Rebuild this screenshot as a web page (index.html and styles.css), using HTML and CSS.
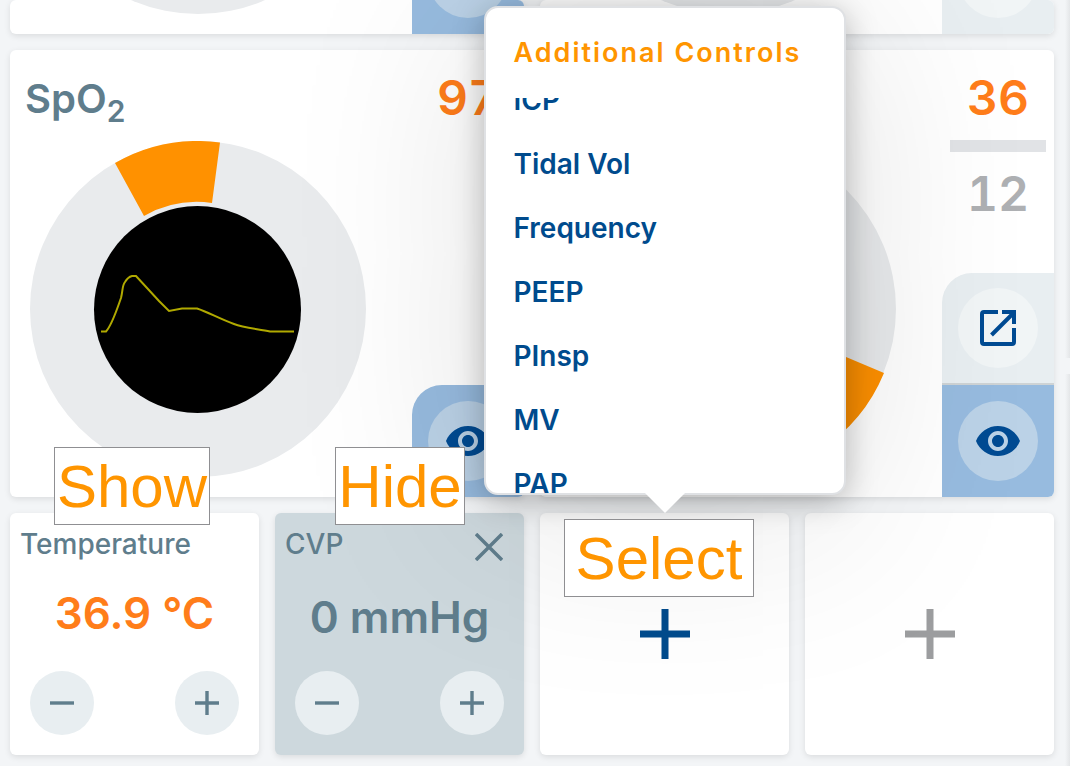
FILE: index.html
```html
<!DOCTYPE html>
<html lang="en">
<head>
	<meta charset="utf-8">
	<meta name="viewport" content="width=device-width, initial-scale=1.0">
	<title>Patient Monitor</title>
	<link rel="stylesheet" href="styles.css">
</head>
<body>
	<svg class="defs" aria-hidden="true">
		<symbol id="eye" viewBox="0 0 24 24">
			<path d="M12 4.5C7 4.5 2.73 7.61 1 12c1.73 4.39 6 7.5 11 7.5s9.27-3.11 11-7.5c-1.73-4.39-6-7.5-11-7.5zM12 17c-2.76 0-5-2.24-5-5s2.24-5 5-5 5 2.24 5 5-2.24 5-5 5zm0-8c-1.66 0-3 1.34-3 3s1.34 3 3 3 3-1.34 3-3-1.34-3-3-3z"/>
		</symbol>
		<symbol id="minus" viewBox="0 0 24 24">
			<path d="M0 10.3h24v3.4H0z"/>
		</symbol>
		<symbol id="plus" viewBox="0 0 24 24">
			<path d="M0 10.3h10.3V0h3.4v10.3H24v3.4H13.7V24h-3.4V13.7H0z"/>
		</symbol>
		<symbol id="plus-big" viewBox="0 0 50 50">
			<path d="M0 21.5h21.5V0h7v21.5H50v7H28.500V50h-7V28.500H0z"/>
		</symbol>
	</svg>

	<div class="screen">
		<main>
			<!-- bottom edge of the cards above -->
			<section class="card wide">
				<div class="gauge-area">
					<svg class="gauge" viewBox="0 0 336 336"><circle cx="168" cy="168" r="168" fill="#e9ebed"/></svg>
				</div>
				<div class="side">
					<div class="actions">
						<button class="action active" aria-label="Toggle visibility"><span class="round"></span></button>
					</div>
				</div>
			</section>
			<section class="card wide">
				<div class="gauge-area">
					<svg class="gauge" viewBox="0 0 336 336"><circle cx="168" cy="168" r="168" fill="#e9ebed"/></svg>
				</div>
				<div class="side">
					<div class="actions">
						<button class="action" aria-label="Toggle visibility"><span class="round"></span></button>
					</div>
				</div>
			</section>

			<section class="card wide">
				<div class="gauge-area">
					<h2 class="name">SpO<sub>2</sub></h2>
					<svg class="gauge" viewBox="0 0 336 336">
						<circle cx="168" cy="168" r="168" fill="#e9ebed"/>
						<path d="M85 22A168 168 0 0 1 190 1.500L182 62A107 107 0 0 0 114 75z" fill="#ff9100"/>
						<circle cx="167.500" cy="168.500" r="103.500" fill="#000"/>
						<path d="M71 190.500h5C82 184 87 168 91 157C93 149 92 145 95 141Q98 136 102 135h4L129 160L139 170L152 167.500H167C178 171 188 177 204 183C214 187 229 188 240 190.500H264" fill="none" stroke="#b0a900" stroke-width="2"/>
					</svg>
				</div>
				<div class="side">
					<div class="reading">97</div>
					<div class="actions">
						<button class="action active" aria-label="Toggle SpO2"><span class="round"><svg class="icon"><use href="#eye"/></svg></span></button>
					</div>
				</div>
			</section>

			<section class="card wide">
				<div class="gauge-area">
					<svg class="gauge" viewBox="0 0 336 336">
						<circle cx="168" cy="168" r="168" fill="#e9ebed"/>
						<path d="M324 232A168 168 0 0 1 260 309L226 258A107 107 0 0 0 267 208z" fill="#ff9100"/>
						<circle cx="167.500" cy="168.500" r="103.500" fill="#000"/>
					</svg>
				</div>
				<div class="side">
					<div class="reading">36</div>
					<div class="divider"></div>
					<div class="reading second">12</div>
					<div class="actions">
						<button class="action ruled" aria-label="Open in window">
							<span class="round">
								<svg class="icon open" viewBox="0 0 36 36">
									<path d="M18 2H4Q2 2 2 4V32Q2 34 4 34H32Q34 34 34 32V18M22 2H34V14M11.500 25L34 2.500" fill="none" stroke="#004b93" stroke-width="4"/>
								</svg>
							</span>
						</button>
						<button class="action active" aria-label="Toggle visibility"><span class="round"><svg class="icon"><use href="#eye"/></svg></span></button>
					</div>
				</div>
			</section>

			<section class="card small">
				<span class="label show">Show</span>
				<h3>Temperature</h3>
				<div class="value">36.9 °C</div>
				<div class="steps">
					<button aria-label="Decrease temperature"><svg><use href="#minus"/></svg></button>
					<button aria-label="Increase temperature"><svg><use href="#plus"/></svg></button>
				</div>
			</section>

			<section class="card small off">
				<span class="label hide">Hide</span>
				<div class="head">
					<h3>CVP</h3>
					<button class="close" aria-label="Hide CVP">
						<svg viewBox="0 0 28 28"><path d="M1 1L27 27M27 1L1 27" fill="none" stroke="#5f7d8c" stroke-width="3.500"/></svg>
					</button>
				</div>
				<div class="value">0 mmHg</div>
				<div class="steps">
					<button aria-label="Decrease CVP"><svg><use href="#minus"/></svg></button>
					<button aria-label="Increase CVP"><svg><use href="#plus"/></svg></button>
				</div>
			</section>

			<section class="card small">
				<button class="add" aria-label="Add control"><svg><use href="#plus-big"/></svg></button>
				<span class="label select">Select</span>
				<div class="popover">
					<h4>Additional Controls</h4>
					<ul>
						<li><button>ICP</button></li>
						<li><button>Tidal Vol</button></li>
						<li><button>Frequency</button></li>
						<li><button>PEEP</button></li>
						<li><button>PInsp</button></li>
						<li><button>MV</button></li>
						<li><button>PAP</button></li>
					</ul>
				</div>
			</section>

			<section class="card small">
				<button class="add muted" aria-label="Add control"><svg><use href="#plus-big"/></svg></button>
			</section>
		</main>
		<!-- shadow of the neighbouring column -->
		<div class="edge">
			<div class="upper"></div>
			<div class="lower"></div>
		</div>
	</div>
</body>
</html>
```
FILE: styles.css
```css
* {
	padding: 0;
	margin: 0;
	box-sizing: border-box;
}
body {
	font-family: Inter, "Liberation Sans", sans-serif;
	background: #f3f5f7;
	overflow: hidden;
}
button {
	border: none;
	background: transparent;
	font: inherit;
	cursor: pointer;
}
svg {
	display: block;
}
.defs {
	position: absolute;
	width: 0;
	height: 0;
}
.screen {
	display: flex;
	min-height: 100vh;
}
main {
	flex: 1;
	display: grid;
	grid-template-columns: repeat(4, 1fr);
	grid-template-rows: 34px auto auto;
	gap: 16px;
	padding: 0 11px 11px 10px;
}
.card {
	position: relative;
	min-width: 0;
	background: white;
	border-radius: 6px;
	box-shadow: 0 2px 6px rgba(0, 0, 0, 0.1);
}

/* gauge cards */
.wide {
	grid-column: span 2;
	display: flex;
	justify-content: space-between;
	align-items: flex-end;
	overflow: hidden;
}
.gauge-area {
	padding: 0 0 20px 20px;
}
.gauge {
	width: 336px;
	height: 336px;
}
.name {
	height: 91px;
	margin-left: -5px;
	padding-top: 25px;
	font-size: 40px;
	line-height: 48px;
	font-weight: 600;
	color: #5f7d8c;
}
.name sub {
	font-size: 30px;
	line-height: 30px;
}
.side {
	align-self: stretch;
	width: 112px;
	display: flex;
	flex-direction: column;
	justify-content: flex-end;
	align-items: center;
}
.reading {
	padding-top: 19px;
	height: 90px;
	font-size: 48px;
	line-height: 58px;
	font-weight: 600;
	font-variant-numeric: tabular-nums;
	color: #ff7d1a;
}
.reading.second {
	padding-top: 13px;
	color: #aeb0b3;
}
.divider {
	width: 96px;
	height: 12px;
	background: #e1e3e6;
}
.actions {
	flex: none;
	width: 112px;
	border-top-left-radius: 30px;
	overflow: hidden;
}
.reading ~ .actions {
	margin-top: auto;
}
.action {
	display: flex;
	justify-content: center;
	align-items: center;
	width: 100%;
	height: 112px;
	background: #e8eef1;
}
.action.ruled {
	border-bottom: 2px solid #ced3d5;
}
.action.active {
	background: #97bbdf;
}
.round {
	display: flex;
	justify-content: center;
	align-items: center;
	width: 80px;
	height: 80px;
	border-radius: 50%;
	background: #f1f5f6;
}
.active .round {
	background: #bbd2e7;
}
.icon {
	width: 48px;
	height: 48px;
	fill: #004b93;
}
.icon.open {
	width: 36px;
	height: 36px;
}

/* small cards */
.small {
	height: 242px;
	display: flex;
	flex-direction: column;
}
.small h3 {
	padding: 14px 10px 0;
	font-size: 28px;
	line-height: 34px;
	font-weight: 500;
	color: #5f7d8c;
}
.value {
	padding-top: 25px;
	text-align: center;
	font-size: 44px;
	line-height: 54px;
	font-weight: 600;
	color: #ff7d1a;
}
.steps {
	display: flex;
	justify-content: space-between;
	margin-top: auto;
	padding: 20px;
}
.steps button {
	display: flex;
	justify-content: center;
	align-items: center;
	width: 64px;
	height: 64px;
	border-radius: 50%;
	background: #e8eef1;
}
.steps svg {
	width: 24px;
	height: 24px;
	fill: #5f7d8c;
}
.off {
	background: #cdd8dd;
}
.off .value {
	padding-top: 29px;
	color: #5f7d8c;
}
.head {
	display: flex;
	justify-content: space-between;
}
.close {
	padding: 20px 21px 0 0;
	height: 48px;
}
.close svg {
	width: 28px;
	height: 28px;
}
.add {
	flex: 1;
	display: flex;
	justify-content: center;
	align-items: center;
}
.add svg {
	width: 50px;
	height: 50px;
	fill: #004b8d;
}
.add.muted svg {
	fill: #9c9d9f;
}

/* captions laid over the cards */
.label {
	position: absolute;
	z-index: 3;
	height: 78px;
	border: 1px solid #8f8f92;
	background: white;
	font-family: "Liberation Sans", Arial, sans-serif;
	font-size: 60px;
	line-height: 78px;
	text-align: center;
	color: #ff9500;
}
.show {
	top: -66px;
	left: 44px;
	width: 156px;
}
.hide {
	top: -66px;
	left: 60px;
	width: 130px;
}
.select {
	top: 6px;
	left: 24px;
	width: 190px;
}

.popover {
	position: absolute;
	z-index: 2;
	left: 50%;
	bottom: 260px;
	width: 362px;
	height: 489px;
	margin-left: -181px;
	display: flex;
	flex-direction: column;
	background: white;
	border: 2px solid #dfe1e4;
	border-radius: 14px;
	box-shadow: 0 6px 32px rgba(0, 0, 0, 0.26), 0 20px 200px rgba(0, 0, 0, 0.13);
}
.popover::after {
	content: "";
	position: absolute;
	top: 100%;
	left: 50%;
	margin-left: -20px;
	border: 20px solid transparent;
	border-bottom: none;
	border-top-color: white;
}
.popover h4 {
	padding-left: 28px;
	font-size: 27px;
	line-height: 90px;
	font-weight: 600;
	letter-spacing: 2px;
	color: #ff9500;
}
.popover ul {
	flex: 1;
	min-height: 0;
	overflow: hidden;
	list-style: none;
}
.popover li:first-child {
	margin-top: -30px;
}
.popover li button {
	width: 100%;
	height: 64px;
	padding-left: 28px;
	text-align: left;
	font-size: 28px;
	font-weight: 600;
	color: #004b8d;
}

.edge {
	width: 5px;
	display: flex;
	flex-direction: column;
	gap: 16px;
}
.edge div {
	background: linear-gradient(to right, #f3f5f7, #e4e6e8);
}
.edge .upper {
	height: 358px;
}
.edge .lower {
	flex: 1;
}
```
